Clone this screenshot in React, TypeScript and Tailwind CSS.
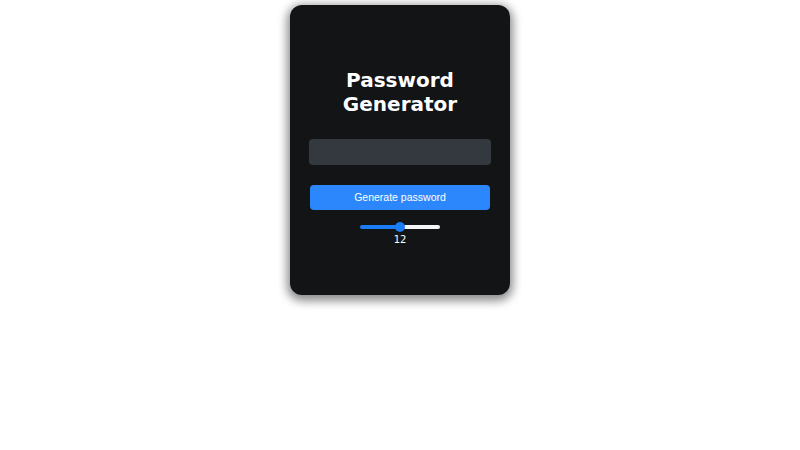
import { useState } from "react";

export default function App() {
  const [length, setLength] = useState(12);
  const [password, setPassword] = useState("");

  const min = 4;
  const max = 20;
  const pct = ((length - min) / (max - min)) * 100;

  const generate = () => {
    const chars = "ABCDEFGHIJKLMNOPQRSTUVWXYZabcdefghijklmnopqrstuvwxyz0123456789!@#$%^&*";
    let out = "";
    for (let i = 0; i < length; i++) {
      out += chars[Math.floor(Math.random() * chars.length)];
    }
    setPassword(out);
  };

  return (
    <div className="flex justify-center pt-[5px] w-[800px] h-[450px] bg-white font-['DejaVu_Sans',sans-serif]">
      <div className="flex flex-col items-center w-[220px] h-[290px] rounded-xl bg-[#121416] pt-[63px] shadow-[0_3px_10px_3px_rgba(0,0,0,0.45)]">
        <h1 className="text-white text-[20px] leading-6 font-bold text-center">
          Password
          <br />
          Generator
        </h1>

        <input
          type="text"
          readOnly
          value={password}
          className="mt-[23px] w-[182px] h-[26px] rounded-sm bg-[#343940] px-2 text-white text-xs outline-none"
        />

        <button
          onClick={generate}
          className="mt-5 w-[180px] h-[25px] rounded-sm bg-[#2b87fb] text-white text-[10.5px] font-['Liberation_Sans',Arial,sans-serif]"
        >
          Generate password
        </button>

        <input
          type="range"
          min={min}
          max={max}
          value={length}
          onChange={(e) => setLength(Number(e.target.value))}
          className="mt-[15px] w-20 h-1 appearance-none rounded-full outline-none cursor-pointer [&::-webkit-slider-thumb]:appearance-none [&::-webkit-slider-thumb]:w-[10px] [&::-webkit-slider-thumb]:h-[10px] [&::-webkit-slider-thumb]:rounded-full [&::-webkit-slider-thumb]:bg-[#1b7cf4]"
          style={{
            background: `linear-gradient(to right, #1b7cf4 ${pct}%, #f5f5f5 ${pct}%)`,
          }}
        />
        <span className="mt-[5px] text-white text-[10px] leading-3">{length}</span>
      </div>
    </div>
  );
}
